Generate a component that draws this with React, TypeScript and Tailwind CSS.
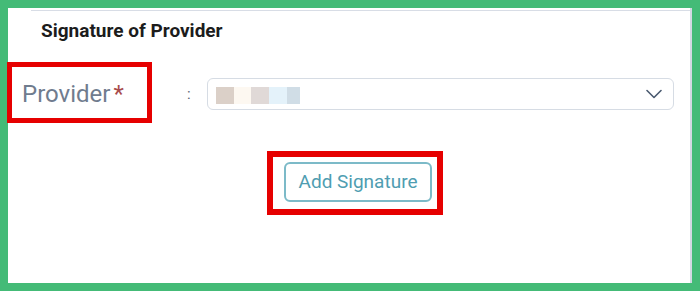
import React from "react";

export default function App() {
  return (
    <div className="relative w-[700px] h-[291px] overflow-hidden" style={{ fontFamily: "Roboto, 'Liberation Sans', sans-serif" }}>
      <div className="w-full h-full border-8 border-[#44bb77] bg-white">
        <div className="h-full border-r-2 border-[#d3d9e2] pt-[2px] flex flex-col">
          <div className="ml-[23px] border-t border-[#d8dde6] pt-[8px] pl-[10px]">
            <div className="text-[19px] leading-[24px] font-bold text-[#1c1c1c]">Signature of Provider</div>
          </div>
          <div className="mt-[35px] flex items-center pl-[14px] pr-[16px]">
            <div className="w-[165px] text-[24px] leading-[32px] text-[#707c8e]">
              Provider<span className="text-[#a84b4b] ml-[3px]">*</span>
            </div>
            <span className="text-[15px] leading-[32px] text-[#5b6472] w-[4px]">:</span>
            <div className="ml-[16px] flex-1 h-[32px] border border-[#d6dce4] rounded-md flex items-center justify-between pl-[8px] pr-[11px]">
              <div className="flex h-[17px] mt-[2px]">
                <div className="w-[18px] bg-[#dbd0c8]" />
                <div className="w-[17px] bg-[#fdf8f1]" />
                <div className="w-[18px] bg-[#e0d9d7]" />
                <div className="w-[18px] bg-[#e4f2fa]" />
                <div className="w-[13px] bg-[#d0dde6]" />
              </div>
              <svg width="16" height="10" viewBox="0 0 16 10" fill="none">
                <polyline points="1,1.5 8,8.5 15,1.5" stroke="#4a5a70" strokeWidth="1.6" strokeLinecap="round" strokeLinejoin="round" />
              </svg>
            </div>
          </div>
          <div className="mt-[52px] ml-[276px]">
            <button className="w-[148px] h-[40px] border-2 border-[#7cbac8] rounded-md text-[19px] text-[#4f9db1] flex items-center justify-center bg-white">
              Add Signature
            </button>
          </div>
        </div>
      </div>
      <div className="absolute left-[7px] top-[62px] w-[145px] h-[61px] border-[5px] border-[#e60000]" />
      <div className="absolute left-[267px] top-[151px] w-[176px] h-[64px] border-[6px] border-[#e60000]" />
    </div>
  );
}
